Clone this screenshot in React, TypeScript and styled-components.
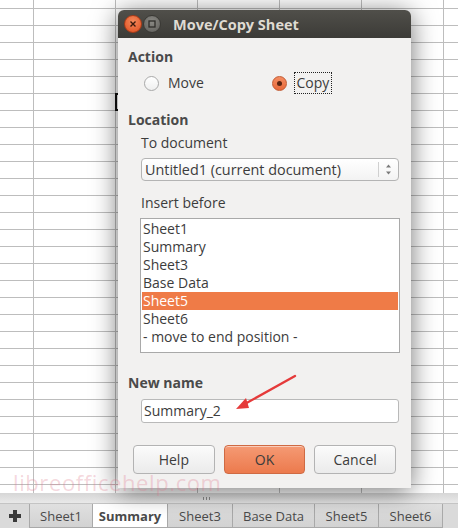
import React from 'react';
import styled, {createGlobalStyle} from 'styled-components';

const GlobalStyle = createGlobalStyle`
  html, body { margin: 0; padding: 0; }
  body { font-family: "Open Sans", "Noto Sans", sans-serif; background: #fff; }
  * { box-sizing: border-box; }
`;

const Screen = styled.div`
  position: relative;
  width: 458px;
  height: 528px;
  overflow: hidden;
  display: flex;
  flex-direction: column;
`;

const Grid = styled.div`
  position: relative;
  flex: 0 0 493px;
  background-color: #fff;
  background-image: linear-gradient(to right, #bdbdbd 1px, transparent 1px),
    linear-gradient(to bottom, #bdbdbd 1px, transparent 1px);
  background-size: 82px 17px;
  background-position: 33px 8px;
`;

// selected cell, mostly hidden under the dialog
const CellCursor = styled.div`
  position: absolute;
  left: 115px;
  top: 93px;
  width: 83px;
  height: 18px;
  border: 2px solid #111;
`;

const Splitter = styled.div`
  flex: 0 0 10px;
  background: linear-gradient(#d6d6d6, #e9e9e9);
  display: flex;
  justify-content: center;
  align-items: center;
  >span{
    margin-left: -46px;
    width: 7px;
    height: 3px;
    border-left: 1px solid #8a8a8a;
    border-right: 1px solid #8a8a8a;
    position: relative;
    &::after{
      content: '';
      position: absolute;
      left: 2px;
      top: 0;
      height: 3px;
      border-left: 1px solid #8a8a8a;
    }
  }
`;

const TabBar = styled.div`
  flex: 1;
  display: flex;
  background: #dadada;
  border-top: 1px solid #c4c4c4;
`;

const AddTab = styled.div`
  width: 30px;
  display: flex;
  align-items: center;
  justify-content: center;
`;

const Tab = styled.div<{$active?: boolean; $w: number}>`
  width: ${p => p.$w}px;
  margin-left: -1px;
  display: flex;
  align-items: center;
  justify-content: center;
  font-size: 13px;
  color: #4a4a4a;
  border: 1px solid #a9a9a9;
  border-top: none;
  font-weight: ${p => (p.$active ? 700 : 400)};
  background: ${p => (p.$active ? '#fff' : 'linear-gradient(#e0e0e0, #d2d2d2)')};
  &:first-of-type{ margin-left: 0; }
`;

const Dialog = styled.div`
  position: absolute;
  left: 118px;
  top: 10px;
  width: 293px;
  height: 478px;
  display: flex;
  flex-direction: column;
  border-radius: 6px 6px 0 0;
  box-shadow: 0 3px 26px rgba(0, 0, 0, 0.55);
  background: #f2f1f0;
`;

const TitleBar = styled.div`
  height: 28px;
  display: flex;
  align-items: center;
  padding-left: 6px;
  border-radius: 6px 6px 0 0;
  background: linear-gradient(#504f4a, #3c3b37);
`;

const WinButton = styled.div<{$close?: boolean}>`
  width: 18px;
  height: 18px;
  border-radius: 50%;
  margin-right: 1px;
  display: flex;
  align-items: center;
  justify-content: center;
  background: ${p => (p.$close
    ? 'radial-gradient(circle at 50% 35%, #f58a5c, #df4d1f)'
    : 'radial-gradient(circle at 50% 35%, #8a8984, #5f5e5a)')};
  border: 1px solid ${p => (p.$close ? '#a83b18' : '#3a3935')};
`;

const Title = styled.div`
  margin-left: 11px;
  font-size: 14.5px;
  font-weight: 700;
  color: #dfdbd2;
`;

const Body = styled.div`
  flex: 1;
  display: flex;
  flex-direction: column;
  padding: 10px 12px 0 10px;
  color: #3c3c3c;
  font-size: 14px;
`;

const Heading = styled.div<{$top: number}>`
  margin-top: ${p => p.$top}px;
  line-height: 18px;
  font-weight: 700;
  color: #4a4a4a;
`;

const Label = styled.div<{$top: number}>`
  margin-top: ${p => p.$top}px;
  margin-left: 13px;
  line-height: 18px;
`;

const RadioRow = styled.div`
  margin-top: 8px;
  height: 18px;
  display: flex;
  padding-left: 16px;
`;

const RadioOption = styled.label`
  width: 133px;
  display: flex;
  align-items: center;
  line-height: 18px;
`;

const RadioDot = styled.span<{$on?: boolean}>`
  width: 15px;
  height: 15px;
  border-radius: 50%;
  margin-right: 9px;
  display: flex;
  align-items: center;
  justify-content: center;
  border: 1px solid ${p => (p.$on ? '#c35a32' : '#a9a9a9')};
  background: ${p => (p.$on ? 'linear-gradient(#f48d62, #e8693a)' : 'linear-gradient(#ffffff, #efefef)')};
  >i{
    width: 5px;
    height: 5px;
    border-radius: 50%;
    background: #5b2512;
  }
`;

const Focused = styled.span`
  outline: 1px dotted #222;
  outline-offset: 1px;
  padding: 0 1px;
`;

const Combo = styled.div`
  margin: 6px 0 0 13px;
  height: 23px;
  display: flex;
  align-items: center;
  border: 1px solid #b4b4b4;
  border-radius: 4px;
  background: linear-gradient(#ffffff, #f3f3f3);
  padding-left: 3px;
  font-size: 14.4px;
  >span{ flex: 1; }
`;

const Spinner = styled.div`
  width: 20px;
  height: 15px;
  border-left: 1px solid #d0d0d0;
  display: flex;
  align-items: center;
  justify-content: center;
`;

const ListBox = styled.div`
  margin: 6px -1px 0 12px;
  height: 135px;
  border: 1px solid #a9a9a9;
  background: #fff;
  padding: 1px;
`;

const ListItem = styled.div<{$selected?: boolean}>`
  height: 18px;
  line-height: 18px;
  padding-left: 1px;
  background: ${p => (p.$selected ? '#ef7b47' : 'transparent')};
  color: ${p => (p.$selected ? '#fff' : '#3c3c3c')};
`;

const TextField = styled.div`
  margin: 7px 0 0 13px;
  height: 24px;
  line-height: 22px;
  border: 1px solid #b9b9b9;
  border-radius: 3px;
  background: #fff;
  padding-left: 2px;
`;

const ButtonRow = styled.div`
  margin: 22px 3px 0 5px;
  display: grid;
  grid-template-columns: repeat(3, 1fr);
  gap: 9px;
`;

const Button = styled.button<{$primary?: boolean}>`
  height: 29px;
  font-family: inherit;
  font-size: 14px;
  color: #3c3c3c;
  border-radius: 4px;
  border: 1px solid ${p => (p.$primary ? '#cf6a43' : '#b3b3b3')};
  background: ${p => (p.$primary ? 'linear-gradient(#f59a74, #ec7a4d)' : 'linear-gradient(#fbfbfb, #ebebeb)')};
  box-shadow: inset 0 1px 0 rgba(255, 255, 255, 0.5);
`;

const Watermark = styled.div`
  position: absolute;
  left: 13px;
  top: 467px;
  font-size: 22px;
  letter-spacing: 0.6px;
  color: rgba(222, 120, 140, 0.3);
  pointer-events: none;
`;

const Overlay = styled.svg`
  position: absolute;
  left: 0;
  top: 0;
  pointer-events: none;
`;

const sheets = ['Sheet1', 'Summary', 'Sheet3', 'Base Data', 'Sheet5', 'Sheet6', '- move to end position -'];

const tabs = [
  {name: 'Sheet1', w: 64},
  {name: 'Summary', w: 76},
  {name: 'Sheet3', w: 66},
  {name: 'Base Data', w: 83},
  {name: 'Sheet5', w: 65},
  {name: 'Sheet6', w: 65},
];

function App() {
  return (
    <Screen>
      <GlobalStyle/>
      <Grid>
        <CellCursor/>
      </Grid>
      <Splitter><span/></Splitter>
      <TabBar>
        <AddTab>
          <svg width="12" height="12" viewBox="0 0 12 12">
            <path d="M4 0h4v4h4v4H8v4H4V8H0V4h4z" fill="#3a3a3a"/>
          </svg>
        </AddTab>
        {tabs.map(t =>
          <Tab key={t.name} $w={t.w} $active={t.name === 'Summary'}>{t.name}</Tab>
        )}
      </TabBar>

      <Dialog>
        <TitleBar>
          <WinButton $close>
            <svg width="8" height="8" viewBox="0 0 8 8">
              <path d="M1.5 1.5l5 5M6.5 1.5l-5 5" stroke="#3b1a0d" strokeWidth="1.4"/>
            </svg>
          </WinButton>
          <WinButton>
            <svg width="8" height="8" viewBox="0 0 8 8">
              <rect x="1" y="1" width="6" height="6" fill="none" stroke="#2e2d2a" strokeWidth="1.3"/>
            </svg>
          </WinButton>
          <Title>Move/Copy Sheet</Title>
        </TitleBar>
        <Body>
          <Heading $top={0}>Action</Heading>
          <RadioRow>
            <RadioOption><RadioDot/>Move</RadioOption>
            <RadioOption><RadioDot $on><i/></RadioDot><Focused>Copy</Focused></RadioOption>
          </RadioRow>
          <Heading $top={19}>Location</Heading>
          <Label $top={5}>To document</Label>
          <Combo>
            <span>Untitled1 (current document)</span>
            <Spinner>
              <svg width="7" height="11" viewBox="0 0 7 11">
                <path d="M3.5 0.5L6 3.5H1z M3.5 10.5L6 7.5H1z" fill="#7a7a7a"/>
              </svg>
            </Spinner>
          </Combo>
          <Label $top={13}>Insert before</Label>
          <ListBox>
            {sheets.map(s => <ListItem key={s} $selected={s === 'Sheet5'}>{s}</ListItem>)}
          </ListBox>
          <Heading $top={21}>New name</Heading>
          <TextField>Summary_2</TextField>
          <ButtonRow>
            <Button>Help</Button>
            <Button $primary>OK</Button>
            <Button>Cancel</Button>
          </ButtonRow>
        </Body>
      </Dialog>

      <Overlay width="458" height="528">
        <path d="M295 376L243 405" stroke="#e53a3a" strokeWidth="2.4" strokeLinecap="round"/>
        <path d="M236 409L246 398L249 408z" fill="#e53a3a"/>
      </Overlay>
      <Watermark>libreofficehelp.com</Watermark>
    </Screen>
  );
}

export default App;
